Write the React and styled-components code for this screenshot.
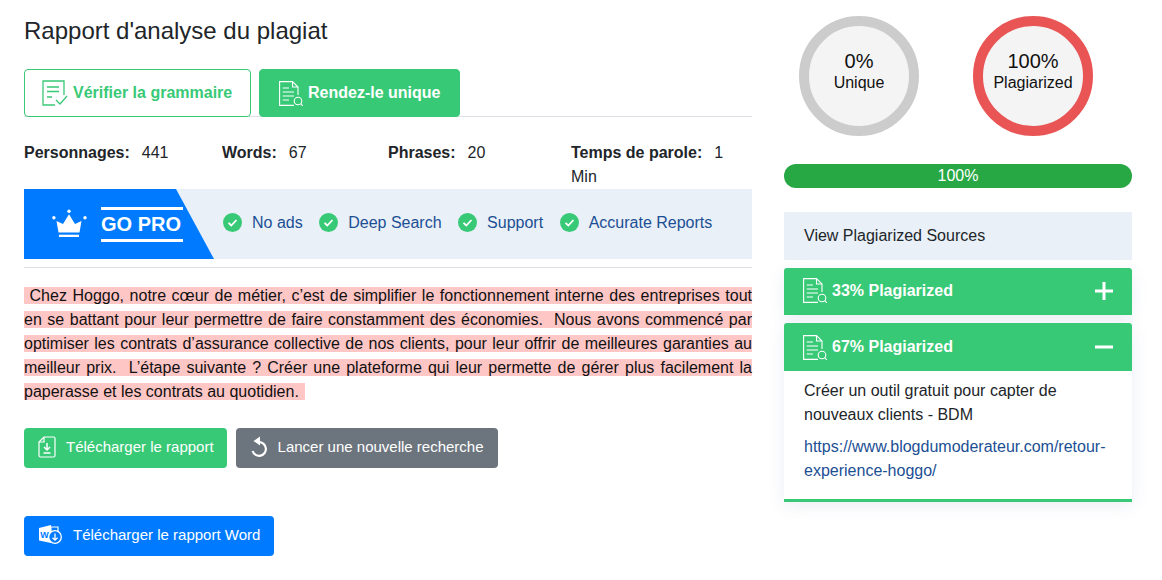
import React from "react";
import styled, { createGlobalStyle } from "styled-components";

const GREEN = "#38c976";
const BLUE = "#007bff";
const PALE = "#e9f0f8";

const GlobalStyle = createGlobalStyle`
  html, body { margin: 0; padding: 0; background: #fff; }
  body { font-family: "Liberation Sans", Arial, sans-serif; color: #212529; }
`;

const Page = styled.div`
  width: 1162px;
  height: 580px;
  overflow: hidden;
  box-sizing: border-box;
  padding: 0 30px 0 24px;
  display: grid;
  grid-template-columns: 728px 348px;
  column-gap: 32px;
`;

const Main = styled.main`
  display: flex;
  flex-direction: column;
`;

const Title = styled.h1`
  margin: 16px 0 0;
  font-size: 24px;
  line-height: 29px;
  font-weight: 400;
`;

const Tabs = styled.div`
  margin-top: 24px;
  height: 48px;
  box-sizing: border-box;
  display: flex;
  gap: 8px;
  border-bottom: 1px solid #dee2e6;
`;

const Tab = styled.button`
  flex: none;
  box-sizing: border-box;
  height: 48px;
  width: ${p => p.$w}px;
  padding: 0 0 0 ${p => p.$pad}px;
  display: flex;
  align-items: center;
  gap: ${p => p.$gap}px;
  border: 1px solid ${GREEN};
  border-radius: 4px;
  background: ${p => (p.$solid ? GREEN : "#fff")};
  color: ${p => (p.$solid ? "#fff" : GREEN)};
  font: 700 16px "Liberation Sans", Arial, sans-serif;
`;

const Stats = styled.div`
  margin-top: 24px;
  display: grid;
  grid-template-columns: 198px 166px 183px 181px;
  font-size: 16px;
  line-height: 24px;
`;

const Stat = styled.div`
  b { margin-right: 12px; }
`;

const Banner = styled.div`
  height: 70px;
  background: ${PALE};
  display: flex;
  align-items: center;
`;

const ProBadge = styled.div`
  width: 190px;
  height: 70px;
  box-sizing: border-box;
  padding-left: 28px;
  display: flex;
  align-items: center;
  gap: 13px;
  background: ${BLUE};
  clip-path: polygon(0 0, 152px 0, 190px 100%, 0 100%);
  color: #fff;
`;

const ProLabel = styled.span`
  height: 29px;
  width: 82px;
  border-top: 3px solid #fff;
  border-bottom: 3px solid #fff;
  font-size: 20px;
  font-weight: 700;
  line-height: 28px;
  white-space: nowrap;
`;

const Perks = styled.ul`
  margin: 0 0 3px 9px;
  padding: 0;
  list-style: none;
  display: flex;
  gap: 16.5px;
`;

const Perk = styled.li`
  display: flex;
  align-items: center;
  gap: 10px;
  font-size: 16px;
  color: #1b4f94;
`;

const Rule = styled.div`
  margin-top: 8px;
  border-top: 1px solid #dee2e6;
`;

const Report = styled.p`
  margin: 16px 0 0;
  font-size: 16px;
  line-height: 24px;
  color: #111;
  text-align: justify;
  span { background: #ffc6c6; padding-right: 6px; }
`;

const Actions = styled.div`
  margin-top: 24px;
  display: flex;
  gap: 9px;
`;

const Action = styled.button`
  height: 40px;
  box-sizing: border-box;
  padding: 0 ${p => p.$right || 14}px 3px 14px;
  display: flex;
  align-items: center;
  gap: ${p => p.$gap}px;
  border: 0;
  border-radius: 4px;
  background: ${p => p.$bg};
  color: #fff;
  font: 400 15px "Liberation Sans", Arial, sans-serif;
`;

const WordRow = styled(Actions)`
  margin-top: 48px;
`;

const Side = styled.aside`
  display: flex;
  flex-direction: column;
`;

const Dials = styled.div`
  margin-top: 16px;
  padding-left: 15px;
  display: flex;
  gap: 54px;
`;

const Dial = styled.div`
  width: 120px;
  height: 120px;
  box-sizing: border-box;
  border: 10px solid ${p => p.$ring};
  border-radius: 50%;
  background: #f4f4f4;
  display: flex;
  flex-direction: column;
  align-items: center;
  padding-top: 24px;
  color: #111;
  strong { font-size: 20px; line-height: 23px; font-weight: 400; }
  span { font-size: 16px; line-height: 20px; }
`;

const Bar = styled.div`
  margin-top: 28px;
  height: 24px;
  border-radius: 12px;
  background: #28a745;
  color: #fff;
  font-size: 16px;
  line-height: 24px;
  text-align: center;
`;

const SourcesHead = styled.div`
  margin-top: 24px;
  height: 48px;
  padding-left: 20px;
  background: ${PALE};
  font-size: 16px;
  line-height: 48px;
`;

const Card = styled.section`
  margin-top: 8px;
  box-shadow: 0 4px 16px rgba(70, 90, 160, 0.1);
  border-bottom: ${p => (p.$open ? `3px solid ${GREEN}` : "0")};
`;

const CardHead = styled.div`
  height: ${p => (p.$open ? 48 : 47)}px;
  box-sizing: border-box;
  padding: 0 19px ${p => (p.$open ? 0 : 2)}px 19px;
  display: flex;
  align-items: center;
  gap: 5px;
  border-radius: 3px 3px 0 0;
  background: ${GREEN};
  color: #fff;
  font-size: 16px;
  font-weight: 700;
  em { margin-left: auto; display: flex; }
`;

const CardBody = styled.div`
  padding: 8px 20px 16px;
  background: #fff;
  font-size: 16px;
  line-height: 24px;
  p { margin: 0 0 8px; }
  a { color: #1b4f94; text-decoration: none; display: block; }
`;

const DocIcon = () => (
  <svg width="24" height="25" viewBox="0 0 24 25" fill="none" stroke="#fff" strokeWidth="1.1">
    <path d="M19 14V6L13.5 0.6H0.6V24.4H15" />
    <path d="M13.5 0.6V6H19" />
    <path d="M3.7 7H10M3.7 11H15M3.7 15H15M3.7 19H10" />
    <circle cx="19" cy="20" r="3.8" />
    <path d="M21.7 22.7L24 25" />
  </svg>
);

const CheckDocIcon = () => (
  <svg width="26" height="26" viewBox="0 0 26 26" fill="none" stroke={GREEN} strokeWidth="1.3">
    <path d="M22 15V1H1V25H13" />
    <path d="M5 7H17M5 11.5H17M5 17H10" />
    <path d="M14 20L18 24L25 16" />
  </svg>
);

const CrownIcon = () => (
  <svg width="36" height="30" viewBox="0 0 36 30" fill="#fff">
    <path d="M4.5 12L11 15L17 5.3L23 15L29.5 12L27.5 23.5H6.5Z" />
    <rect x="7" y="25.7" width="20" height="2.3" />
    <circle cx="17" cy="2.3" r="1.7" />
    <circle cx="1.9" cy="8.7" r="1.7" />
    <circle cx="33" cy="8.7" r="1.7" />
  </svg>
);

const CheckDot = () => (
  <svg width="19" height="19" viewBox="0 0 19 19">
    <circle cx="9.5" cy="9.5" r="9.5" fill={GREEN} />
    <path d="M5.5 9.8L8.3 12.5L13.5 7" fill="none" stroke="#fff" strokeWidth="1.8" />
  </svg>
);

const FileDownIcon = () => (
  <svg width="18" height="22" viewBox="0 0 18 22" fill="none" stroke="#fff" strokeWidth="1.2">
    <path d="M6 1H15.5Q17 1 17 2.5V19.5Q17 21 15.5 21H2.5Q1 21 1 19.5V6Z" />
    <path d="M6 1V6H1" />
    <path d="M9 7V14M6 11L9 14L12 11M5.5 17H12.5" strokeWidth="1.5" />
  </svg>
);

const RetryIcon = () => (
  <svg width="20" height="22" viewBox="0 0 20 22" fill="none" stroke="#fff" strokeWidth="2.2">
    <path d="M9 6.2A6.8 6.8 0 1 1 2.6 15" />
    <path d="M3.5 5L10 0.5V9.5Z" fill="#fff" stroke="none" />
  </svg>
);

const WordIcon = () => (
  <svg width="24" height="22" viewBox="0 0 24 22">
    <path d="M1 4L13 1V19L1 16.5Z" fill="#fff" />
    <text x="2.2" y="13.5" fontSize="9" fontWeight="700" fill={BLUE} fontFamily="Liberation Sans, Arial, sans-serif">W</text>
    <path d="M13 3H20V8H13Z" fill="none" stroke="#fff" strokeWidth="1.2" />
    <circle cx="17" cy="13" r="6.3" fill={BLUE} stroke="#fff" strokeWidth="1.3" />
    <path d="M17 9.5V16.2M14.5 13.7L17 16.2L19.5 13.7" fill="none" stroke="#fff" strokeWidth="1.3" />
  </svg>
);

const PlusIcon = ({ minus }) => (
  <svg width="18" height="18" viewBox="0 0 18 18" fill="#fff">
    <rect x="0" y="7.5" width="18" height="3" />
    {!minus && <rect x="7.5" y="0" width="3" height="18" />}
  </svg>
);

// nbsp keeps the source's doubled spaces without pre-wrap
const REPORT_TEXT =
  "\u00a0Chez Hoggo, notre cœur de métier, c’est de simplifier le fonctionnement interne des entreprises tout en se battant pour leur permettre de faire constamment des économies.\u00a0 Nous avons commencé par optimiser les contrats d’assurance collective de nos clients, pour leur offrir de meilleures garanties au meilleur prix.\u00a0 L’étape suivante ? Créer une plateforme qui leur permette de gérer plus facilement la paperasse et les contrats au quotidien.";

const stats = [
  ["Personnages:", "441"],
  ["Words:", "67"],
  ["Phrases:", "20"],
  ["Temps de parole:", "1 Min"],
];

const perks = ["No ads", "Deep Search", "Support", "Accurate Reports"];

export default function App() {
  return (
    <Page>
      <GlobalStyle />
      <Main>
        <Title>Rapport d'analyse du plagiat</Title>
        <Tabs>
          <Tab $w={227} $pad={17} $gap={5}>
            <CheckDocIcon />
            Vérifier la grammaire
          </Tab>
          <Tab $solid $w={201} $pad={19} $gap={5}>
            <DocIcon />
            Rendez-le unique
          </Tab>
        </Tabs>
        <Stats>
          {stats.map(([k, v]) => (
            <Stat key={k}>
              <b>{k}</b>
              {v}
            </Stat>
          ))}
        </Stats>
        <Banner>
          <ProBadge>
            <CrownIcon />
            <ProLabel>GO PRO</ProLabel>
          </ProBadge>
          <Perks>
            {perks.map(p => (
              <Perk key={p}>
                <CheckDot />
                {p}
              </Perk>
            ))}
          </Perks>
        </Banner>
        <Rule />
        <Report>
          <span>{REPORT_TEXT}</span>
        </Report>
        <Actions>
          <Action $bg={GREEN} $gap={10} $right={13}>
            <FileDownIcon />
            Télécharger le rapport
          </Action>
          <Action $bg="#6c757d" $gap={8}>
            <RetryIcon />
            Lancer une nouvelle recherche
          </Action>
        </Actions>
        <WordRow>
          <Action $bg={BLUE} $gap={11}>
            <WordIcon />
            Télécharger le rapport Word
          </Action>
        </WordRow>
      </Main>
      <Side>
        <Dials>
          <Dial $ring="#cccccc">
            <strong>0%</strong>
            <span>Unique</span>
          </Dial>
          <Dial $ring="#e95555">
            <strong>100%</strong>
            <span>Plagiarized</span>
          </Dial>
        </Dials>
        <Bar>100%</Bar>
        <SourcesHead>View Plagiarized Sources</SourcesHead>
        <Card>
          <CardHead>
            <DocIcon />
            33% Plagiarized
            <em>
              <PlusIcon />
            </em>
          </CardHead>
        </Card>
        <Card $open>
          <CardHead $open>
            <DocIcon />
            67% Plagiarized
            <em>
              <PlusIcon minus />
            </em>
          </CardHead>
          <CardBody>
            <p>Créer un outil gratuit pour capter de nouveaux clients - BDM</p>
            <a href="#source">https://www.blogdumoderateur.com/retour-experience-hoggo/</a>
          </CardBody>
        </Card>
      </Side>
    </Page>
  );
}
